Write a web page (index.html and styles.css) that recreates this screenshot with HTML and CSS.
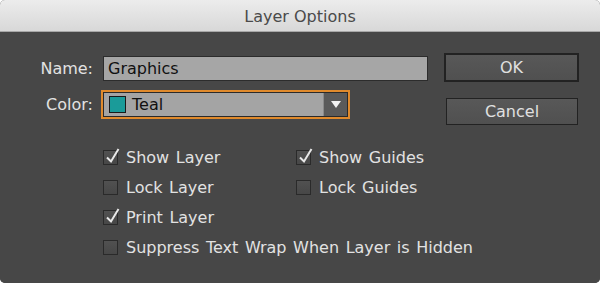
FILE: index.html
```html
<!DOCTYPE html>
<html>
<head>
<meta charset="utf-8">
<link rel="stylesheet" href="styles.css">
</head>
<body>
<div class="window">
  <div class="titlebar">Layer Options</div>
  <div class="panel">
    <div class="top">
      <div class="fields">
        <label class="lbl">Name:</label>
        <div class="input">Graphics</div>
        <label class="lbl">Color:</label>
        <div class="select">
          <span class="swatch"></span>
          <span class="sel-text">Teal</span>
          <span class="sel-btn"><svg width="10" height="7" viewBox="0 0 10 7"><path d="M0 0 H10 L5 7 Z" fill="#f2f2f2"/></svg></span>
        </div>
      </div>
      <div class="buttons">
        <div class="btn ok">OK</div>
        <div class="btn cancel">Cancel</div>
      </div>
    </div>
    <div class="checks">
      <div class="row"><span class="box checked"><svg class="tick" width="16" height="17" viewBox="0 0 16 17"><path d="M3 9.5 L7 13.5 L14.5 1" fill="none" stroke="#e8e8e8" stroke-width="2"/></svg></span>Show Layer</div>
      <div class="row"><span class="box checked"><svg class="tick" width="16" height="17" viewBox="0 0 16 17"><path d="M3 9.5 L7 13.5 L14.5 1" fill="none" stroke="#e8e8e8" stroke-width="2"/></svg></span>Show Guides</div>
      <div class="row"><span class="box"></span>Lock Layer</div>
      <div class="row"><span class="box"></span>Lock Guides</div>
      <div class="row span"><span class="box checked"><svg class="tick" width="16" height="17" viewBox="0 0 16 17"><path d="M3 9.5 L7 13.5 L14.5 1" fill="none" stroke="#e8e8e8" stroke-width="2"/></svg></span>Print Layer</div>
      <div class="row span"><span class="box"></span>Suppress Text Wrap When Layer is Hidden</div>
    </div>
  </div>
</div>
</body>
</html>
```

FILE: styles.css
```css
html, body {
  margin: 0;
  padding: 0;
  background: #ffffff;
}
body {
  width: 600px;
  height: 283px;
  overflow: hidden;
  font-family: "DejaVu Sans", "Open Sans", sans-serif;
}
.window {
  width: 600px;
  height: 283px;
  border-radius: 5px;
  overflow: hidden;
  display: flex;
  flex-direction: column;
  background: #474747;
}
.titlebar {
  height: 30px;
  flex: none;
  background: linear-gradient(#ececec, #d8d8d8);
  border-bottom: 1px solid #a8a8a8;
  color: #4a4a4a;
  font-size: 16px;
  display: flex;
  align-items: center;
  justify-content: center;
  padding-top: 1px;
  box-sizing: content-box;
}
.panel {
  flex: 1;
  background: #474747;
  padding-top: 21px;
  display: flex;
  flex-direction: column;
}
.top {
  display: flex;
  align-items: flex-start;
}
.fields {
  margin-top: 3px;
  display: grid;
  grid-template-columns: 93px 325px;
  column-gap: 10px;
  row-gap: 11px;
  align-items: center;
}
.lbl {
  text-align: right;
  color: #e2e2e2;
  font-size: 16px;
}
.input {
  height: 23px;
  background: #a6a6a6;
  border: 1px solid #2c2c2c;
  color: #111;
  font-size: 16px;
  line-height: 23px;
  padding-left: 4px;
}
.select {
  width: 243px;
  height: 23px;
  background: #a4a4a4;
  border: 1px solid #2a2a2a;
  box-shadow: 0 0 0 2px #e08a2c;
  display: flex;
  align-items: center;
}
.swatch {
  width: 15px;
  height: 15px;
  margin-left: 5px;
  background: #1a9b99;
  border: 1px solid #1a1a1a;
}
.sel-text {
  flex: 1;
  margin-left: 6px;
  color: #111;
  font-size: 16px;
}
.sel-btn {
  width: 23px;
  height: 23px;
  background: #5a5a5a;
  border-left: 1px solid #8a8a8a;
  display: flex;
  align-items: center;
  justify-content: center;
}
.buttons {
  margin-left: 16px;
  display: flex;
  flex-direction: column;
  align-items: flex-start;
}
.btn {
  box-sizing: border-box;
  color: #e0e0e0;
  font-size: 16px;
  display: flex;
  align-items: center;
  justify-content: center;
  background: linear-gradient(#585858, #505050);
}
.ok {
  width: 135px;
  height: 29px;
  border: 2px solid #222;
}
.cancel {
  width: 132px;
  height: 27px;
  margin-top: 16px;
  margin-left: 2px;
  border: 1px solid #222;
}
.checks {
  margin-top: 17px;
  padding-left: 103px;
  display: grid;
  grid-template-columns: 193px auto;
}
.row {
  height: 30px;
  display: flex;
  align-items: center;
  color: #e2e2e2;
  font-size: 16px;
  word-spacing: 1.5px;
}
.row.span {
  grid-column: 1 / 3;
}
.box {
  position: relative;
  width: 13px;
  height: 13px;
  margin-right: 8px;
  border: 1px solid #2a2a2a;
  background: linear-gradient(#515151, #474747);
  flex: none;
}
.tick {
  position: absolute;
  left: 0;
  top: -3px;
}
```
